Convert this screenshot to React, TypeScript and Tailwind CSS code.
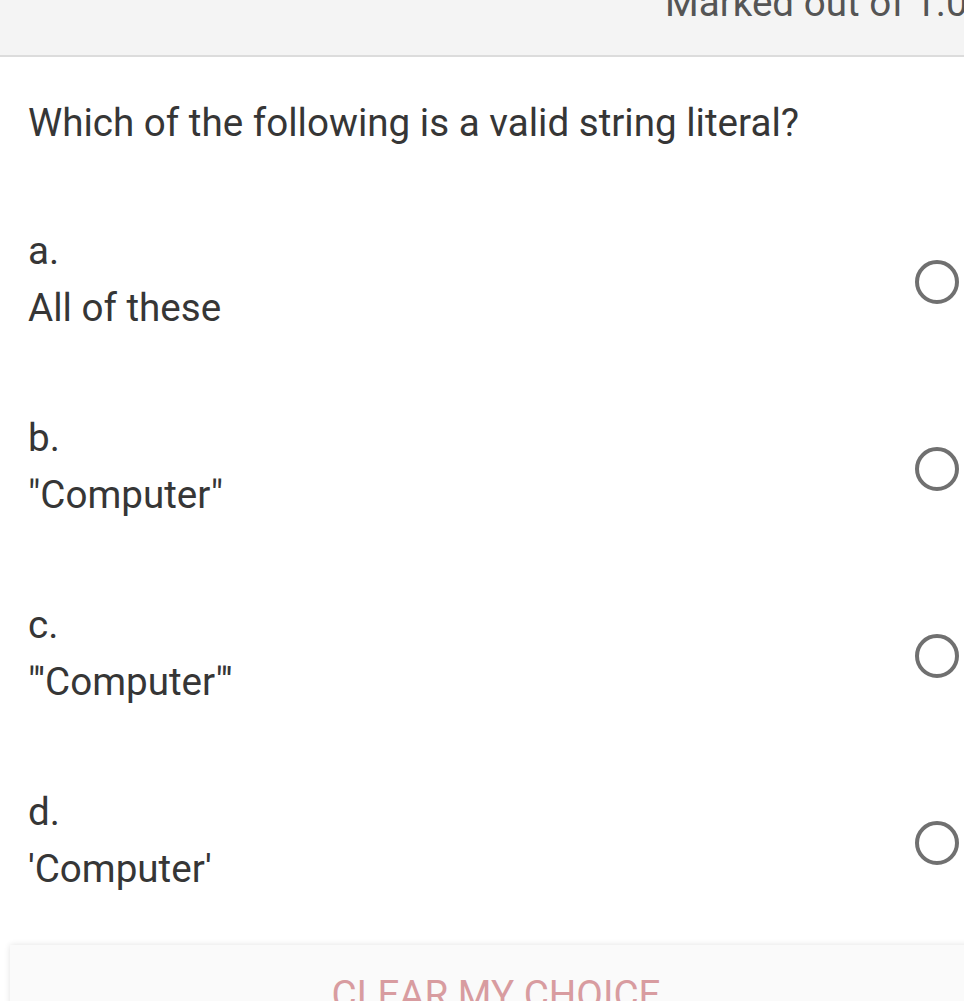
import React from 'react';

const options = [
  { letter: 'a.', text: 'All of these' },
  { letter: 'b.', text: '"Computer"' },
  { letter: 'c.', text: '"\'Computer"\'' },
  { letter: 'd.', text: "'Computer'" },
];

export default function App() {
  return (
    <div className="w-[964px] h-[1001px] overflow-hidden bg-white text-[#363636] font-['Roboto',sans-serif]">
      <div className="h-[57px] bg-[#f4f4f4] border-b-2 border-[#dcdcdc] overflow-hidden">
        <div className="-mt-[15px] pl-[665px] whitespace-nowrap text-[38.6px] leading-[36px] text-[#555555]">
          Marked out of 1.00
        </div>
      </div>

      <div className="pt-[37px] pl-[28px] text-[38.6px] leading-[57px]">
        Which of the following is a valid string literal?
      </div>

      <div className="mt-[71px] flex flex-col gap-[73px]">
        {options.map((o) => (
          <div key={o.letter} className="flex items-center justify-between pl-[28px] pr-[5px]">
            <div className="text-[38.6px] leading-[57px]">
              <div>{o.letter}</div>
              <div>{o.text}</div>
            </div>
            <div className="w-[44px] h-[44px] rounded-full border-4 border-[#707070] mt-[6px]" />
          </div>
        ))}
      </div>

      <div className="mt-[48px] ml-[10px] -mr-[18px] h-[120px] bg-[#fafafa] shadow-[0_0_6px_rgba(0,0,0,0.12)] flex justify-center">
        <div className="pt-[30px] text-[38.6px] leading-[40px] uppercase text-[#d89ca0]">
          Clear my choice
        </div>
      </div>
    </div>
  );
}
